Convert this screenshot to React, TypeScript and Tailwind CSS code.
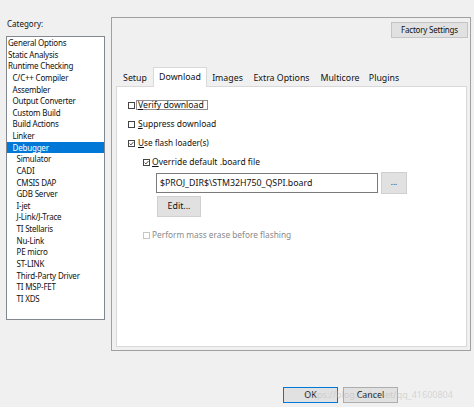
import React from "react";

type Item = { label: string; level: number; selected?: boolean };

const items: Item[] = [
  { label: "General Options", level: 0 },
  { label: "Static Analysis", level: 0 },
  { label: "Runtime Checking", level: 0 },
  { label: "C/C++ Compiler", level: 1 },
  { label: "Assembler", level: 1 },
  { label: "Output Converter", level: 1 },
  { label: "Custom Build", level: 1 },
  { label: "Build Actions", level: 1 },
  { label: "Linker", level: 1 },
  { label: "Debugger", level: 1, selected: true },
  { label: "Simulator", level: 2 },
  { label: "CADI", level: 2 },
  { label: "CMSIS DAP", level: 2 },
  { label: "GDB Server", level: 2 },
  { label: "I-jet", level: 2 },
  { label: "J-Link/J-Trace", level: 2 },
  { label: "TI Stellaris", level: 2 },
  { label: "Nu-Link", level: 2 },
  { label: "PE micro", level: 2 },
  { label: "ST-LINK", level: 2 },
  { label: "Third-Party Driver", level: 2 },
  { label: "TI MSP-FET", level: 2 },
  { label: "TI XDS", level: 2 },
];

const indent = ["pl-[1px]", "pl-[5.5px]", "pl-[9.5px]"];

function Check({ checked, disabled }: { checked?: boolean; disabled?: boolean }) {
  return (
    <span
      className={
        "w-[7px] h-[7px] border bg-white flex items-center justify-center shrink-0 " +
        (disabled ? "border-[#c6c6c6]" : "border-[#444444]")
      }
    >
      {checked && (
        <svg width="5" height="5" viewBox="0 0 5 5">
          <path d="M0.6 2.6 L1.9 3.9 L4.4 1.1" stroke="#333" strokeWidth="0.9" fill="none" />
        </svg>
      )}
    </span>
  );
}

const tabs = [
  { label: "Setup", w: "w-[36px]" },
  { label: "Download", w: "w-[54px]", active: true },
  { label: "Images", w: "w-[41px]" },
  { label: "Extra Options", w: "w-[67px]" },
  { label: "Multicore", w: "w-[50px]" },
  { label: "Plugins", w: "w-[38px]" },
];

export default function App() {
  return (
    <div className="w-[474px] h-[407px] bg-[#f0f0f0] overflow-hidden relative text-black font-['Noto_Sans',sans-serif]">
      <div className="flex items-start">
        {/* left category column */}
        <div className="ml-[6px] mt-[18px] w-[99px]">
          <div className="h-[18px] text-[8px] leading-[12px] pl-[1px] text-[#111]">Category:</div>
          <div className="h-[284px] border border-[#828790] bg-white pt-0">
            {items.map((it) => (
              <div
                key={it.label}
                className={
                  "h-[11.64px] leading-[11.64px] text-[8px] whitespace-nowrap tracking-[-0.2px] " +
                  indent[it.level] +
                  (it.selected ? " bg-[#0078d7] text-white" : " text-[#111]")
                }
              >
                {it.label}
              </div>
            ))}
          </div>
        </div>

        {/* right panel */}
        <div className="ml-[6px] mt-[17px] w-[360px] h-[334px] border border-[#a0a0a0] flex flex-col">
          <div className="flex justify-end pt-[4px] pr-[2px]">
            <div className="w-[77px] h-[16px] bg-[#e1e1e1] border border-[#c4c4c4] text-[8px] leading-[14px] text-center text-[#111] tracking-[-0.2px]">
              Factory Settings
            </div>
          </div>

          <div className="mt-[29px] ml-[5px] flex items-end h-[19px] relative z-10">
            {tabs.map((t) => (
              <div
                key={t.label}
                className={
                  t.w +
                  " text-[8.8px] text-center whitespace-nowrap text-[#111] " +
                  (t.active
                    ? "h-[20px] leading-[19px] bg-white border border-b-0 border-[#d9d9d9] -mb-[1px]"
                    : "h-[16px] leading-[16px]")
                }
              >
                {t.label}
              </div>
            ))}
          </div>

          <div className="ml-[4px] mr-[3px] h-[261px] border border-[#d9d9d9] bg-white text-[8.5px] text-[#111]">
            <div className="mt-[12px] ml-[11px] h-[12px] flex items-center">
              <Check />
              <span className="ml-[1px] border border-[#8f8f8f] h-[10px] leading-[8px] px-[1px] pr-[3px] text-[8.7px]">
                <span className="underline underline-offset-1">V</span>erify download
              </span>
            </div>
            <div className="mt-[7px] ml-[11px] h-[12px] flex items-center">
              <Check />
              <span className="ml-[3px] leading-[12px]">
                <span className="underline underline-offset-1">S</span>uppress download
              </span>
            </div>
            <div className="mt-[7px] ml-[11px] h-[12px] flex items-center">
              <Check checked />
              <span className="ml-[3px] leading-[12px] text-[8.2px]">
                <span className="underline underline-offset-1">U</span>se flash loader(s)
              </span>
            </div>
            <div className="mt-[7px] ml-[26px] h-[12px] flex items-center">
              <Check checked />
              <span className="ml-[2px] leading-[12px]">
                <span className="underline underline-offset-1">O</span>verride default .board file
              </span>
            </div>
            <div className="mt-[4px] ml-[39px] flex items-center">
              <div className="w-[222px] h-[20px] border border-[#7a7a7a] bg-white leading-[18px] pl-[3px] text-[8.8px] text-[#111]">
                $PROJ_DIR$\STM32H750_QSPI.board
              </div>
              <div className="ml-[3px] w-[26px] h-[22px] bg-[#e1e1e1] border border-[#d0d0d0] text-[8px] leading-[18px] text-center text-[#333]">
                ...
              </div>
            </div>
            <div className="mt-[2px] ml-[40px] w-[44px] h-[21px] bg-[#e1e1e1] border border-[#d0d0d0] leading-[19px] text-center text-[#111] text-[8.8px]">
              Edit...
            </div>
            <div className="mt-[12px] ml-[26px] h-[12px] flex items-center">
              <Check disabled />
              <span className="ml-[2px] leading-[12px] text-[#8a8a8a] text-[8.3px]">Perform mass erase before flashing</span>
            </div>
          </div>
        </div>
      </div>

      {/* bottom buttons */}
      <div className="flex justify-end pr-[76px] mt-[36px] gap-[5px] text-[8.8px] text-[#111]">
        <div className="w-[55px] h-[16px] bg-[#e1e1e1] border border-[#0078d7] leading-[14px] text-center">OK</div>
        <div className="w-[55px] h-[16px] bg-[#e1e1e1] border border-[#adadad] leading-[14px] text-center">Cancel</div>
      </div>

      {/* watermark overlay */}
      <div className="absolute left-[305px] top-[389px] text-[9px] leading-[12px] text-[#b8b8b8]/50 whitespace-nowrap pointer-events-none">
        https://blog.csdn.net/qq_41600804
      </div>
    </div>
  );
}
